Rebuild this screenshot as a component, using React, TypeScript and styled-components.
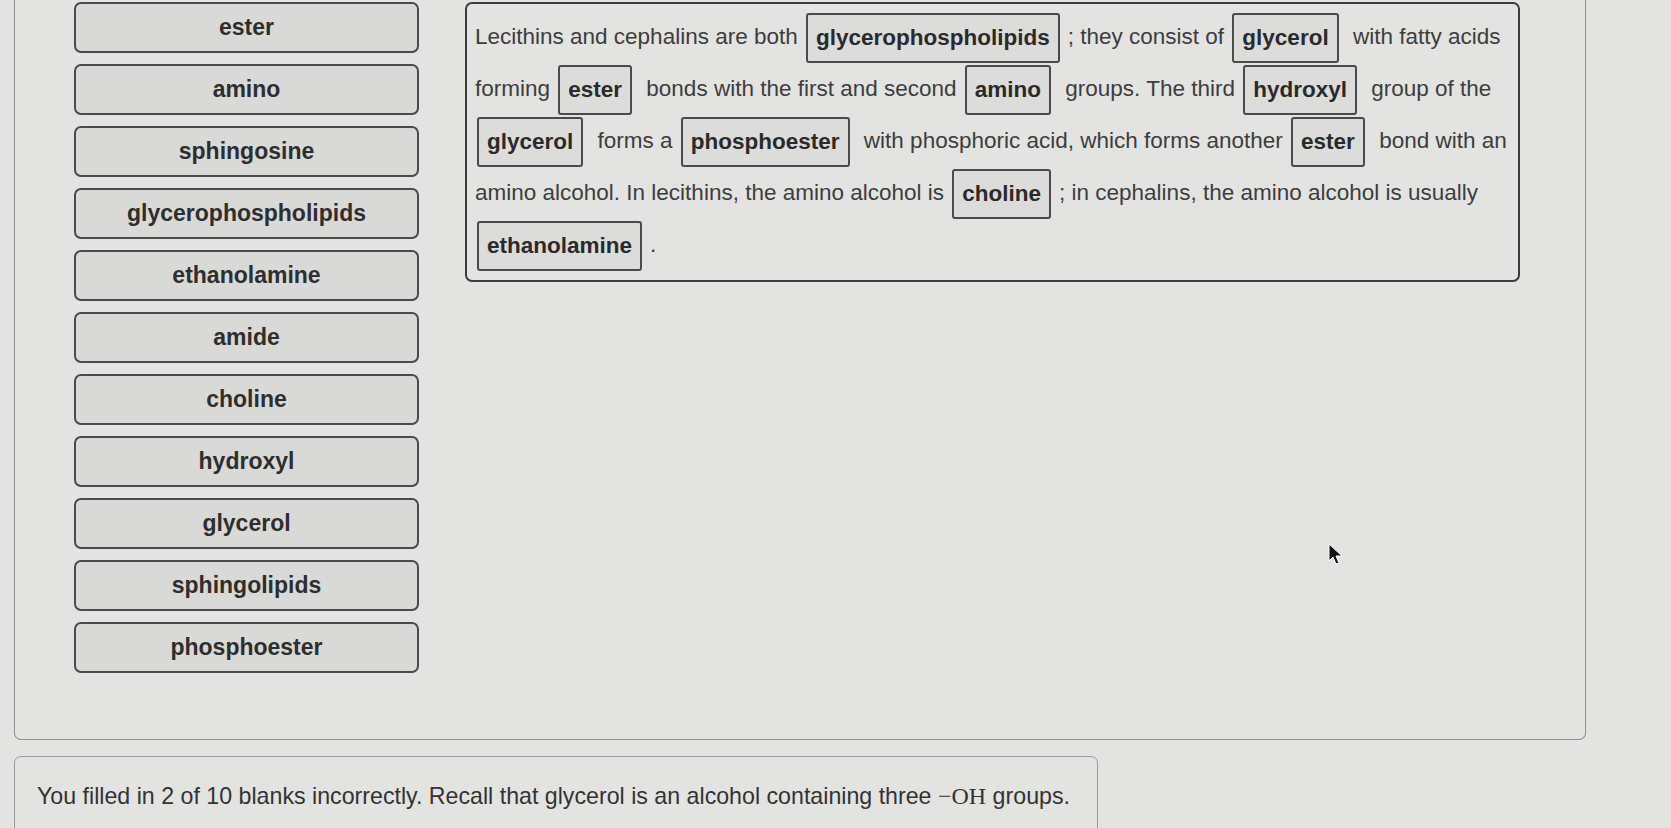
import React from "react";
import styled, { createGlobalStyle } from "styled-components";

const GlobalStyle = createGlobalStyle`
  html, body {
    margin: 0;
    padding: 0;
    background: #e3e3e1;
    font-family: "Liberation Sans", Arial, sans-serif;
    color: #3a3a3a;
    overflow: hidden;
  }
`;

const Page = styled.div`
  position: relative;
  width: 1671px;
  height: 828px;
  overflow: hidden;
`;

const Workspace = styled.section`
  margin-left: 14px;
  width: 1572px;
  box-sizing: border-box;
  border: 1px solid #8f8f8f;
  border-top: 0;
  border-radius: 0 0 7px 7px;
  padding: 2px 0 66px 59px;
  display: flex;
  align-items: flex-start;
  gap: 46px;
`;

const WordBank = styled.div`
  display: flex;
  flex-direction: column;
  gap: 11px;
  width: 345px;
`;

const WordTile = styled.div`
  height: 51px;
  box-sizing: border-box;
  border: 2px solid #4a4a4a;
  border-radius: 7px;
  background: #d9d9d8;
  display: flex;
  align-items: center;
  justify-content: center;
  font-weight: bold;
  font-size: 23px;
  color: #2e2e2e;
`;

const Passage = styled.div`
  width: 1055px;
  box-sizing: border-box;
  border: 2px solid #3c3c3c;
  border-radius: 7px;
  padding: 7px 0 9px 8px;
  font-size: 22.5px;
  line-height: 52px;
  color: #3d3d3d;
`;

const Blank = styled.span`
  display: inline-block;
  vertical-align: middle;
  box-sizing: border-box;
  height: 50px;
  line-height: 26px;
  padding: 10px 8px;
  margin: 0 8px 0 2px;
  border: 2px solid #4a4a4a;
  border-radius: 3px;
  background: #dcdcdb;
  font-weight: bold;
  color: #2a2a2a;
`;

const Feedback = styled.div`
  margin: 16px 0 0 14px;
  width: 1084px;
  min-height: 120px;
  box-sizing: border-box;
  border: 1px solid #9a9a9a;
  border-radius: 7px;
  padding: 26px 22px;
  font-size: 23.2px;
  line-height: 26px;
  color: #333;
`;

const Math = styled.span`
  font-family: "Liberation Serif", "DejaVu Serif", serif;
  font-size: 24px;
`;

const Cursor = styled.svg`
  position: absolute;
  left: 1328px;
  top: 543px;
`;

const words = [
  "ester",
  "amino",
  "sphingosine",
  "glycerophospholipids",
  "ethanolamine",
  "amide",
  "choline",
  "hydroxyl",
  "glycerol",
  "sphingolipids",
  "phosphoester",
];

export default function App() {
  return (
    <Page>
      <GlobalStyle />
      <Workspace>
        <WordBank>
          {words.map((w) => (
            <WordTile key={w}>{w}</WordTile>
          ))}
        </WordBank>
        <Passage>
          Lecithins and cephalins are both <Blank>glycerophospholipids</Blank>
          ; they consist of <Blank>glycerol</Blank> with fatty acids
          <br />
          forming <Blank>ester</Blank> bonds with the first and second{" "}
          <Blank>amino</Blank> groups. The third <Blank>hydroxyl</Blank> group of
          the
          <br />
          <Blank>glycerol</Blank> forms a <Blank>phosphoester</Blank> with
          phosphoric acid, which forms another <Blank>ester</Blank> bond with an
          <br />
          amino alcohol. In lecithins, the amino alcohol is{" "}
          <Blank>choline</Blank>; in cephalins, the amino alcohol is usually
          <br />
          <Blank>ethanolamine</Blank>.
        </Passage>
      </Workspace>
      <Feedback>
        You filled in 2 of 10 blanks incorrectly. Recall that glycerol is an
        alcohol containing three <Math>−OH</Math> groups.
      </Feedback>
      <Cursor width="16" height="24" viewBox="0 0 16 24">
        <path d="M1 1 L1 18 L5 14 L8 21 L11 20 L8 13 L14 13 Z" fill="#111" stroke="#fff" strokeWidth="1" />
      </Cursor>
    </Page>
  );
}
